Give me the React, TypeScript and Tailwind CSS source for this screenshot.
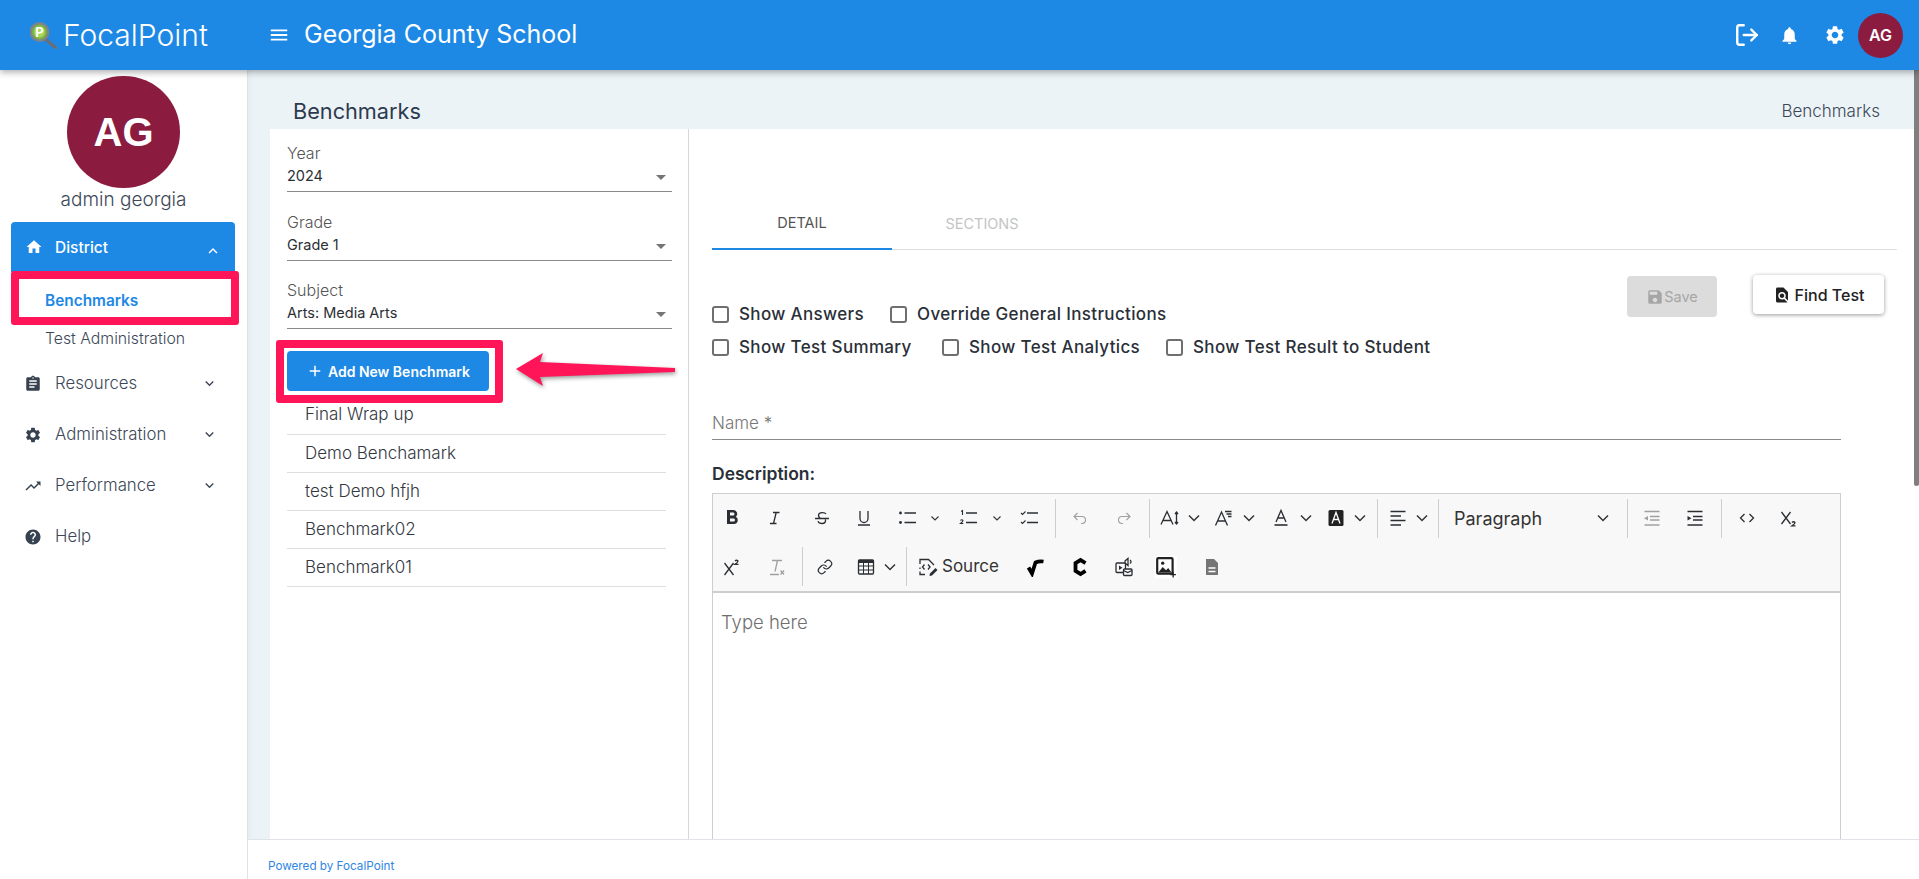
import type { ReactNode } from 'react';
import {
  MdHome,
  MdAssignment,
  MdSettings,
  MdTrendingUp,
  MdHelp,
  MdKeyboardArrowDown,
  MdKeyboardArrowUp,
  MdMenu,
  MdNotifications,
  MdSave,
  MdAdd,
  MdFindInPage,
  MdArrowDropDown,
  MdFormatBold,
} from 'react-icons/md';
import { LogOut, Link as LinkIcon } from 'lucide-react';

const BENCHMARKS = ['Demo Benchamark', 'test Demo hfjh', 'Benchmark02', 'Benchmark01'];

// Toolbar icon, 24px box with a 20px drawing
function Ic({ children, className = '' }: { children: ReactNode; className?: string }) {
  return (
    <span className={`flex h-6 w-6 shrink-0 items-center justify-center ${className}`}>
      <svg viewBox="0 0 20 20" className="h-5 w-5" fill="none" stroke="currentColor" strokeWidth="1.3">
        {children}
      </svg>
    </span>
  );
}

function Chev({ small, className = '' }: { small?: boolean; className?: string }) {
  return (
    <svg viewBox="0 0 12 12" className={`h-3 w-3 shrink-0 text-[#333] ${className}`} fill="none" stroke="currentColor" strokeWidth={small ? 1.1 : 1.5}>
      {small ? <path d="M2.5 4.5l3.5 3.5 3.5-3.5" /> : <path d="M1 3.5l5 5 5-5" />}
    </svg>
  );
}

function Sep({ className = '' }: { className?: string }) {
  return <span className={`h-[39px] w-px shrink-0 bg-[#ccced1] ${className}`} />;
}

function SideItem({ icon, label, chevron = true }: { icon: ReactNode; label: string; chevron?: boolean }) {
  return (
    <div className="flex h-[51px] items-center pl-[24px] text-[#3c4858]">
      <span className="flex w-[18px] justify-center text-[18px] text-[#36424f]">{icon}</span>
      <span className="ml-[13px] w-[146px] text-[16.8px] font-light">{label}</span>
      {chevron && <MdKeyboardArrowDown className="text-[17px]" />}
    </div>
  );
}

function SelectField({ label, value }: { label: string; value: string }) {
  return (
    <div className="w-[385px]">
      <div className="flex h-5 items-center text-[16px] font-light text-[#555]">{label}</div>
      <div className="mt-px flex h-[28px] items-start justify-between border-b border-[#8a8a8a]">
        <span className="flex h-6 items-center text-[14.5px] text-[#2b2f36]">{value}</span>
        <MdArrowDropDown className="mt-[1px] -mr-[1px] text-[24px] text-[#757575]" />
      </div>
    </div>
  );
}

function Check({ label, className = '' }: { label: string; className?: string }) {
  return (
    <label className={`flex items-center ${className}`}>
      <span className="h-[17px] w-[17px] shrink-0 rounded-[3px] border-2 border-[#6f6f6f]" />
      <span className="ml-[10px] whitespace-nowrap text-[17px] font-medium tracking-[0.35px] text-[#2a2f38]">{label}</span>
    </label>
  );
}

function Logo() {
  return (
    <svg viewBox="0 0 27 27" className="h-[27px] w-[27px]">
      <line x1="14" y1="16" x2="26" y2="26" stroke="#6b6f73" strokeWidth="3" strokeLinecap="round" />
      <circle cx="9.5" cy="10" r="8.8" fill="#7cb342" stroke="#7d8489" strokeWidth="2.4" />
      <circle cx="9.5" cy="10" r="5.5" fill="#a5d65a" />
      <text x="9.5" y="14.5" textAnchor="middle" fontSize="13" fontWeight="700" fill="#fff" fontFamily="Inter, sans-serif">
        P
      </text>
    </svg>
  );
}

function Toolbar() {
  return (
    <div className="border-b-2 border-[#ccced1] bg-[#f8f8f8] text-[#2a2e33]">
      {/* first row */}
      <div className="flex h-[48px] items-center pl-[7px]">
        <span className="flex h-6 w-6 items-center justify-center"><MdFormatBold className="text-[28px]" /></span>
        <Ic className="ml-[19px]"><path d="M8 4.5h6.5M5 15.5h6.5M11.2 4.5l-2.7 11" /></Ic>
        <Ic className="ml-[23px]"><path d="M14 6c-1-1.7-7-2.3-7.5 1-.2 1.3.4 2.3 1.5 3M13.3 11.5c.8 2-.3 4-3.3 4-2.4 0-3.5-1-4-2.3M3 10.5h14" /></Ic>
        <Ic className="ml-[18px]"><path d="M6 3v7.5a4 4 0 0 0 8 0V3M4 17h12" /></Ic>
        <Ic className="ml-[20px]">
          <circle cx="2.5" cy="5" r="1.4" fill="currentColor" stroke="none" />
          <circle cx="2.5" cy="14.5" r="1.4" fill="currentColor" stroke="none" />
          <path d="M6.5 5H18M6.5 14.5H18" />
        </Ic>
        <Chev small className="ml-[9px]" />
        <Ic className="ml-[16px]">
          <path d="M2.2 3.5l1.3-1V7M1.5 12.5q1.5-1.5 2.5 0 0 1-2.5 3h2.8" strokeWidth="1.1" />
          <path d="M7 5h11M7 14.5h11" />
        </Ic>
        <Chev small className="ml-[10px]" />
        <Ic className="ml-[15px]">
          <path d="M1 5l1.5 1.5 3-3M1 14l1.5 1.5 3-3" strokeWidth="1.1" />
          <path d="M7 5h11M7 14.5h11" />
        </Ic>
        <Sep className="ml-[13px]" />
        <Ic className="ml-[12px] text-[#a0a0a0]"><path d="M7.5 5L4 8.5 7.5 12M4 8.5h8a3.5 3.5 0 0 1 0 7h-1" strokeWidth="1.1" /></Ic>
        <Ic className="ml-[20px] text-[#a0a0a0]"><path d="M12.5 5L16 8.5 12.5 12M16 8.5H8a3.5 3.5 0 0 0 0 7h1" strokeWidth="1.1" /></Ic>
        <Sep className="ml-[13px]" />
        <Ic className="ml-[8px]"><path d="M1 16.5L7 3.5l6 13M3 12.5h8M16.5 4v12M15 6l1.5-2L18 6M15 14l1.5 2 1.5-2" /></Ic>
        <Chev className="ml-[6px]" />
        <Ic className="ml-[12px]"><path d="M1.5 17.5L7.5 4l6 13.5M3.5 13h8M11 3.5h6.5M12.5 6h5M14 8.5h3.5" /></Ic>
        <Chev className="ml-[7px]" />
        <Ic className="ml-[14px]"><path d="M5 14l5-11.5L15 14M6.8 10h6.4" /><path d="M3.5 17h13" strokeWidth="1.6" /></Ic>
        <Chev className="ml-[7px]" />
        <Ic className="ml-[12px]">
          <rect x="2.5" y="2" width="15" height="16" rx="1.5" fill="#222" stroke="none" />
          <path d="M6 15.5l4-11 4 11M7.5 11.5h5" stroke="#fff" />
        </Ic>
        <Chev className="ml-[6px]" />
        <Sep className="ml-[11px]" />
        <Ic className="ml-[8px]"><path d="M2.5 3.5h15M2.5 8H13M2.5 12.5h15M2.5 17H13" /></Ic>
        <Chev className="ml-[6px]" />
        <Sep className="ml-[10px] w-[2px]" />
        <span className="ml-[15px] w-[143px] text-[18px] text-[#333]">Paragraph</span>
        <Chev />
        <Sep className="ml-[18px]" />
        <Ic className="ml-[12px] text-[#a0a0a0]"><path d="M2.5 3.5h15M8 8.5h9.5M8 12h9.5M2.5 17h15" /><path d="M6 8l-4 2.2 4 2.3z" fill="currentColor" stroke="none" /></Ic>
        <Ic className="ml-[19px]"><path d="M2.5 3.5h15M8 8.5h9.5M8 12h9.5M2.5 17h15" /><path d="M2.5 8l4 2.2-4 2.3z" fill="currentColor" stroke="none" /></Ic>
        <Sep className="ml-[14px]" />
        <Ic className="ml-[13px]"><path d="M7.5 6l-4 4 4 4M12.5 6l4 4-4 4" /></Ic>
        <Ic className="ml-[18px]"><path d="M2.5 4l9 12M11.5 4l-9 12M13 14.5q1.5-1.5 3 0 .2 1-3 3.3h3.5" /></Ic>
      </div>
      {/* second row */}
      <div className="flex h-[49px] items-center pl-[7px]">
        <Ic><path d="M2.5 6l9 12M11.500 6l-9 12M13 4q1.5-1.500 3 0 .2 1-3 3.300h3.500" /></Ic>
        <Ic className="ml-[21px] text-[#a0a0a0]"><path d="M5 3.5h10M10.5 3.5L8 14.5M3 17.500h9M13.5 13.500l3.500 4M17 13.500l-3.500 4" /></Ic>
        <Sep className="ml-[13px]" />
        <span className="ml-[10px] flex h-6 w-6 items-center justify-center"><LinkIcon size={16} strokeWidth={1.8} /></span>
        <Ic className="ml-[17px]">
          <rect x="2.5" y="3" width="15" height="14" rx="1" />
          <path d="M2.5 4.5h15" strokeWidth="3" />
          <path d="M7.5 3v14M12.5 3v14M2.5 9h15M2.5 13h15" strokeWidth="1" />
        </Ic>
        <Chev className="ml-[6px]" />
        <Sep className="ml-[10px]" />
        <Ic className="ml-[9px]">
          <path d="M2 7V2.5h8.5L16 8M2 10.5V12M2 14.500v3h5" />
          <path d="M6.5 7.500L4.500 10l2 2.500M10 7.500l2 2.500-2 2.500" />
          <path d="M17.5 11l2 2-5.500 5.500-2.500.5.5-2.500z" fill="currentColor" stroke="none" />
        </Ic>
        <span className="ml-[2px] w-[58px] text-[17px] text-[#333]">Source</span>
        <Ic className="ml-[24px] text-black"><path d="M2.5 10.5l3.5 6 3.5-11c2.5-1.200 5-1.500 8-1" strokeWidth="3.8" /></Ic>
        <Ic className="ml-[20px] text-black"><path d="M15.5 6.200L10.500 3 5.500 6v8l5 3 5-3.200" strokeWidth="3.8" /></Ic>
        <Ic className="ml-[20px]">
          <rect x="2" y="6" width="9.5" height="9.5" rx="1" />
          <path d="M5 8.5l3.5 2.200L5 13z" fill="currentColor" stroke="none" />
          <path d="M11 4l3-2.500v7L11 6zM16 3q2 1.500 0 3.500" />
          <rect x="9.5" y="12" width="8.5" height="6.5" rx="1" fill="#f8f8f8" />
          <path d="M9.5 13.500l4.200 2 4.300-2" />
        </Ic>
        <span className="ml-[18px] flex h-6 w-6 items-center justify-center">
          <svg viewBox="0 0 20 20" className="h-[22px] w-[22px] bg-white" fill="none" stroke="#222">
            <rect x="2" y="2" width="14" height="14" rx="1" strokeWidth="2" />
            <path d="M3 15l4-5 3 3 2-2 3 4z" fill="#222" stroke="none" />
            <circle cx="7" cy="6.5" r="1.5" fill="#222" stroke="none" />
            <path d="M16.5 14.5v5M14 17h5" strokeWidth="1.2" />
          </svg>
        </span>
        <Ic className="ml-[22px] text-[#757575]">
          <path d="M4 2h8l4 4v11.5a.5.5 0 0 1-.5.5h-11a.5.5 0 0 1-.5-.5z" fill="currentColor" stroke="none" />
          <path d="M6.5 11h7M6.5 14.5h7" stroke="#fff" strokeWidth="1.5" />
        </Ic>
      </div>
    </div>
  );
}

export default function App() {
  return (
    <div className="flex h-[879px] w-full flex-col overflow-hidden bg-white [font-family:Inter,sans-serif]">
      {/* Top bar */}
      <header className="relative z-10 flex h-[70px] shrink-0 items-center bg-[#1e88e5] text-white shadow-[0_2px_7px_rgba(0,0,0,0.35)]">
        <div className="flex w-[268px] items-center pl-[30px]">
          <Logo />
          <span className="ml-[6px] text-[30px] font-light">FocalPoint</span>
        </div>
        <MdMenu className="text-[22px]" />
        <span className="ml-[14px] text-[25px] font-normal">Georgia County School</span>
        <div className="ml-auto flex items-center pr-[16px]">
          <LogOut size={26} strokeWidth={2.2} />
          <MdNotifications className="ml-[19px] text-[21px]" />
          <MdSettings className="ml-[24px] text-[22px]" />
          <span className="ml-[12px] flex h-[45px] w-[45px] items-center justify-center rounded-full bg-[#8b1c40] text-[16px] font-semibold">
            AG
          </span>
        </div>
      </header>

      <div className="flex min-h-0 flex-1">
        {/* Sidebar */}
        <aside className="w-[248px] shrink-0 border-r border-[#dfe3e6] bg-white">
          <div className="mx-auto mt-[6px] flex h-[112px] w-[113px] items-center justify-center rounded-full bg-[#8b1c40] text-[40px] font-bold text-white [font-family:'Liberation_Sans',sans-serif]">
            AG
          </div>
          <div className="h-6 text-center text-[19px] font-light leading-6 text-[#3c4858]">admin georgia</div>
          <div className="mx-[11px] mt-[10px] flex h-[50px] w-[224px] items-center rounded-t-[4px] bg-[#1e88e5] pl-[14px] pr-[13px] text-white">
            <MdHome className="text-[18px]" />
            <span className="ml-[12px] flex-1 pt-[2px] text-[15.5px] font-medium">District</span>
            <MdKeyboardArrowUp className="mt-[8px] text-[18px]" />
          </div>
          <div className="-mt-px ml-[11px] flex h-[54px] w-[228px] items-center rounded-[3px] border-8 border-[#ff1558] bg-white pl-[26px] pt-[6px]">
            <span className="text-[15.4px] font-semibold text-[#1e88e5]">Benchmarks</span>
          </div>
          <div className="flex h-[28px] items-center pl-[45px] text-[15.8px] font-light text-[#3c4858]">Test Administration</div>
          <div className="mt-[5px]">
            <SideItem icon={<MdAssignment />} label="Resources" />
            <SideItem icon={<MdSettings />} label="Administration" />
            <SideItem icon={<MdTrendingUp />} label="Performance" />
            <SideItem icon={<MdHelp />} label="Help" chevron={false} />
          </div>
        </aside>

        {/* Page */}
        <div className="flex min-w-0 flex-1 flex-col">
          <div className="flex min-h-0 flex-1">
            <main className="flex min-w-0 flex-1 flex-col bg-[#ecf3f7] shadow-[inset_6px_0_6px_-6px_rgba(0,0,0,0.06)]">
              <div className="flex h-[59px] shrink-0 items-end justify-between pb-[4px] pl-[45px] pr-[34px]">
                <span className="text-[21.7px] font-normal leading-7 text-[#2c3a4f]">Benchmarks</span>
                <span className="text-[17px] font-light leading-7 text-[#3c4858]">Benchmarks</span>
              </div>
              <div className="ml-[22px] flex min-h-0 flex-1 bg-white">
                {/* Left list */}
                <section className="relative w-[419px] shrink-0 border-r border-[#d8d8d8] pl-[6px] pt-[14px]">
                  <div className="ml-[11px] flex flex-col gap-[19.5px]">
                    <SelectField label="Year" value="2024" />
                    <SelectField label="Grade" value="Grade 1" />
                    <SelectField label="Subject" value="Arts: Media Arts" />
                  </div>
                  <div className="mt-[11px] h-[63px] w-[227px] rounded-[3px] border-8 border-[#ff1558] pl-[3px] pt-[3px]">
                    <button className="flex h-[40px] w-[202px] items-center justify-center rounded-[4px] bg-[#1e88e5] text-[14px] font-semibold text-white">
                      <MdAdd className="mr-[4px] text-[18px]" />
                      Add New Benchmark
                    </button>
                  </div>
                  <ul className="ml-[11px] w-[379px] text-[17px] font-light text-[#33383f]">
                    <li className="flex h-[32px] items-center border-b border-[#dedede] pb-[8px] pl-[18px]">Final Wrap up</li>
                    {BENCHMARKS.map((name) => (
                      <li key={name} className="flex h-[38px] items-center border-b border-[#dedede] pl-[18px]">
                        {name}
                      </li>
                    ))}
                  </ul>
                  {/* annotation arrow */}
                  <svg viewBox="0 0 170 50" className="absolute left-[240px] top-[216px] h-[50px] w-[170px] drop-shadow-[1px_2px_2px_rgba(0,0,0,0.4)]">
                    <polygon points="6,24 33,8 30,17 165,23 165,27 30,32 33,41" fill="#ff1558" />
                  </svg>
                </section>

                {/* Right form */}
                <section className="min-w-0 flex-1 pl-[23px]">
                  <div className="mt-[69px] flex h-[52px] w-[1185px] border-b border-[#dedede] text-[14.5px]">
                    <div className="-mb-px flex w-[180px] items-center justify-center border-b-2 border-[#1e88e5] text-[#555]">DETAIL</div>
                    <div className="flex w-[180px] items-center justify-center text-[#c4c4c4]">SECTIONS</div>
                  </div>

                  <div className="flex w-[1172px] justify-between">
                    <div className="pt-[48px]">
                      <div className="flex h-[33px] items-center">
                        <Check label="Show Answers" className="w-[178px]" />
                        <Check label="Override General Instructions" />
                      </div>
                      <div className="flex h-[33px] items-center">
                        <Check label="Show Test Summary" className="w-[230px]" />
                        <Check label="Show Test Analytics" className="w-[224px]" />
                        <Check label="Show Test Result to Student" />
                      </div>
                    </div>
                    <div className="flex items-start pt-[25px]">
                      <button className="mt-px flex h-[41px] w-[90px] items-center justify-center rounded-[4px] bg-[#dcdcdc] text-[14.5px] text-[#a6a6a6]">
                        <MdSave className="text-[18px]" />
                        Save
                      </button>
                      <button className="ml-[36px] flex h-[39px] w-[131px] items-center justify-center rounded-[4px] bg-white text-[16px] font-medium text-[#222] shadow-[0_1px_4px_rgba(0,0,0,0.4)]">
                        <MdFindInPage className="mr-[4px] text-[18px]" />
                        Find Test
                      </button>
                    </div>
                  </div>

                  <div className="mt-[43px] flex h-[33px] w-[1129px] items-center border-b border-[#8a8a8a] pt-[2px] text-[17px] font-light text-[#777]">Name *</div>
                  <div className="mt-[24px] flex h-5 items-center text-[17.5px] font-semibold text-[#2a2f38]">Description:</div>

                  <div className="mt-[9px] h-[400px] w-[1129px] border border-[#ccced1] bg-white">
                    <Toolbar />
                    <div className="pl-[8px] pt-[16px] text-[18.5px] font-light text-[#6f6f6f]">Type here</div>
                  </div>
                </section>
              </div>
            </main>
            {/* page scrollbar */}
            <div className="w-[5px] shrink-0 bg-white">
              <div className="h-[416px] rounded-b-[3px] bg-[#7f7f7f]" />
            </div>
          </div>
          <footer className="relative flex h-[40px] shrink-0 items-center border-t border-[#e0e4e8] bg-white pl-[20px] pt-[14px] text-[11.7px] text-[#2f86e4]">
            Powered by FocalPoint
          </footer>
        </div>
      </div>
    </div>
  );
}
